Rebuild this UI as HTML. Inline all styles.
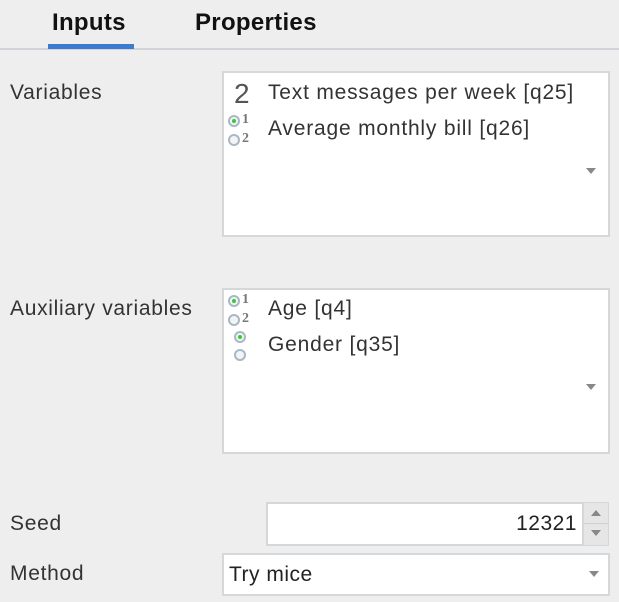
<!DOCTYPE html>
<html><head><style>
body{margin:0;width:619px;height:602px;background:#eeeeee;font-family:"Liberation Sans",sans-serif;position:relative;overflow:hidden;color:#333}
.a{position:absolute}
.tab{font-size:24px;font-weight:bold;color:#111;top:9px;letter-spacing:0.3px}
.lbl{font-size:21px;color:#333;left:10px;letter-spacing:0.7px}
.box{background:#fff;border:2px solid #d5d8db;box-sizing:border-box}
.it{font-size:21px;color:#333;left:268px;letter-spacing:0.8px}
.tri{width:0;height:0;border-left:5px solid transparent;border-right:5px solid transparent;border-top:6px solid #888}
.rad{width:12px;height:12px;border:2px solid #a8b8c6;border-radius:50%;box-sizing:border-box;background:#f4f4f4}
.rad.on::after{content:"";position:absolute;left:2px;top:2px;width:4px;height:4px;border-radius:50%;background:#3c3}
.n{font-size:14px;font-weight:bold;color:#777;font-family:"Liberation Serif",serif}
</style></head><body>
<div class="a tab" style="left:52px">Inputs</div>
<div class="a tab" style="left:195px">Properties</div>
<div class="a" style="left:0;top:48px;width:619px;height:2px;background:#d0d4d8"></div>
<div class="a" style="left:48px;top:44px;width:86px;height:5px;background:#3c7bd0"></div>

<div class="a lbl" style="top:81px">Variables</div>
<div class="a box" style="left:222px;top:71px;width:388px;height:166px"></div>
<div class="a" style="left:234px;top:78px;font-size:28px;color:#555">2</div>
<div class="a it" style="top:81px">Text messages per week [q25]</div>
<div class="a rad on" style="left:228px;top:115px"></div><div class="a n" style="left:242px;top:112px">1</div>
<div class="a rad" style="left:228px;top:134px"></div><div class="a n" style="left:242px;top:131px">2</div>
<div class="a it" style="top:117px">Average monthly bill [q26]</div>
<div class="a tri" style="left:586px;top:168px"></div>

<div class="a lbl" style="top:297px">Auxiliary variables</div>
<div class="a box" style="left:222px;top:288px;width:388px;height:166px"></div>
<div class="a rad on" style="left:228px;top:295px"></div><div class="a n" style="left:242px;top:292px">1</div>
<div class="a rad" style="left:228px;top:314px"></div><div class="a n" style="left:242px;top:311px">2</div>
<div class="a it" style="top:297px">Age [q4]</div>
<div class="a rad on" style="left:234px;top:331px"></div>
<div class="a rad" style="left:234px;top:349px"></div>
<div class="a it" style="top:333px">Gender [q35]</div>
<div class="a tri" style="left:586px;top:384px"></div>

<div class="a lbl" style="top:512px">Seed</div>
<div class="a box" style="left:266px;top:502px;width:318px;height:44px"></div>
<div class="a" style="right:42px;top:512px;font-size:21px;color:#222;letter-spacing:0.5px">12321</div>
<div class="a" style="left:583px;top:502px;width:26px;height:44px;background:#e6e6e6;border:1px solid #d5d8db;box-sizing:border-box"></div>
<div class="a" style="left:583px;top:523px;width:26px;height:1px;background:#d0d0d0"></div>
<div class="a" style="left:591px;top:510px;width:0;height:0;border-left:5px solid transparent;border-right:5px solid transparent;border-bottom:6px solid #888"></div>
<div class="a tri" style="left:591px;top:530px"></div>

<div class="a lbl" style="top:562px">Method</div>
<div class="a box" style="left:222px;top:553px;width:388px;height:43px"></div>
<div class="a" style="left:229px;top:563px;font-size:21px;color:#222;letter-spacing:0.5px">Try mice</div>
<div class="a tri" style="left:589px;top:571px"></div>
</body></html>
